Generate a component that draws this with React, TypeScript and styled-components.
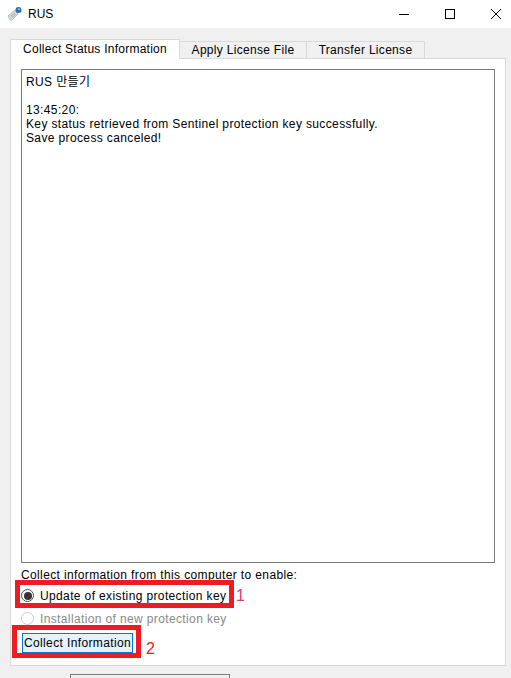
import styled, { createGlobalStyle } from "styled-components";

const GlobalStyle = createGlobalStyle`
    html, body {
        margin: 0;
        padding: 0;
        background: #f0f0f0;
        overflow: hidden;
    }
    * {
        box-sizing: border-box;
    }
`;

const Window = styled.div`
    width: 511px;
    height: 678px;
    overflow: hidden;
    display: flex;
    flex-direction: column;
    background: #f0f0f0;
    color: #000;
    font-family: "Liberation Sans", "Noto Sans CJK KR", sans-serif;
    font-size: 12px;
    letter-spacing: 0.37px;
`;

const TitleBar = styled.div`
    height: 28px;
    flex: none;
    background: #fff;
    display: flex;
    align-items: center;
    padding-left: 7px;
    margin-right: -8px;
`;

const TitleText = styled.span`
    margin-left: 5px;
    letter-spacing: 0;
    flex: 1;
`;

const WinButton = styled.div`
    width: 46px;
    height: 24px;
    display: flex;
    align-items: center;
    justify-content: center;
`;

const Content = styled.div`
    padding: 11px 5px 0 10px;
    display: flex;
    flex-direction: column;
`;

const TabRow = styled.div`
    display: flex;
    align-items: flex-start;
    height: 19px;
    position: relative;
    z-index: 1;
`;

const Tab = styled.div<{ $active?: boolean; $width: number }>`
    width: ${(p) => p.$width}px;
    height: ${(p) => (p.$active ? 20 : 17)}px;
    margin-top: ${(p) => (p.$active ? 0 : 2)}px;
    margin-left: ${(p) => (p.$active ? 0 : -1)}px;
    background: ${(p) => (p.$active ? "#fff" : "#f0f0f0")};
    border: 1px solid #d9d9d9;
    border-bottom: none;
    display: flex;
    align-items: center;
    justify-content: center;
    letter-spacing: ${(p) => (p.$active ? "0.25px" : "0.3px")};
    padding-bottom: ${(p) => (p.$active ? 2 : 1)}px;
    &:first-child {
        margin-left: 0;
    }
`;

const Panel = styled.div`
    height: 608px;
    background: #fff;
    border: 1px solid #d9d9d9;
    padding: 10px 10px 0 10px;
    display: flex;
    flex-direction: column;
`;

const LogBox = styled.div`
    height: 494px;
    flex: none;
    border: 1px solid #7a7a7a;
    padding: 5px 4px;
    line-height: 14px;
`;

const LogLine = styled.div`
    height: 14px;
    white-space: pre;
`;

const GroupLabel = styled.div`
    margin-top: 5px;
    margin-bottom: 2px;
    height: 14px;
    line-height: 14px;
    white-space: nowrap;
`;

const RadioRow = styled.div<{ $disabled?: boolean }>`
    display: flex;
    align-items: center;
    gap: 6px;
    height: 23px;
    color: ${(p) => (p.$disabled ? "#8a8a8a" : "#000")};
    position: relative;
`;

const RadioCircle = styled.span<{ $disabled?: boolean; $checked?: boolean }>`
    width: 13px;
    height: 13px;
    border-radius: 50%;
    border: 1px solid ${(p) => (p.$disabled ? "#cccccc" : "#4d4d4d")};
    display: flex;
    align-items: center;
    justify-content: center;
    background: #fff;
    &::after {
        content: "";
        display: ${(p) => (p.$checked ? "block" : "none")};
        width: 8px;
        height: 8px;
        border-radius: 50%;
        background: #333;
    }
`;

const ButtonWrap = styled.div`
    position: relative;
    width: 111px;
    margin-top: 3px;
    margin-left: 1px;
`;

const CollectButton = styled.button`
    display: block;
    width: 111px;
    height: 20px;
    background: #e5f1fb;
    border: 1px solid #0078d7;
    padding: 0;
    font: inherit;
    letter-spacing: inherit;
    color: #000;
    white-space: nowrap;
`;

const Highlight = styled.div<{ $top: number; $left: number; $width: number; $height: number }>`
    position: absolute;
    top: ${(p) => p.$top}px;
    left: ${(p) => p.$left}px;
    width: ${(p) => p.$width}px;
    height: ${(p) => p.$height}px;
    border: 5px solid #ed1c24;
    pointer-events: none;
`;

const Marker = styled.span<{ $top: number; $left: number; $color: string }>`
    position: absolute;
    top: ${(p) => p.$top}px;
    left: ${(p) => p.$left}px;
    color: ${(p) => p.$color};
    font-size: 16px;
    line-height: 18px;
    letter-spacing: 0;
`;

const BottomBar = styled.div`
    margin-top: 8px;
    margin-left: 60px;
    width: 160px;
    height: 20px;
    border: 1px solid #7a7a7a;
    background: #f0f0f0;
`;

const AppIcon = () => (
    <svg width="16" height="16" viewBox="0 0 16 16">
        <path d="M1 10 L8 4 L11 8 L5 14 L3 14 Z" fill="#d5dbd5" stroke="#a9b0a9" strokeWidth="0.8" />
        <path d="M4 10 L8 7 M5 11.5 L8.5 8.5" stroke="#8f968f" strokeWidth="0.7" />
        <circle cx="11.5" cy="4" r="3" fill="#2a6fb0" />
        <circle cx="12" cy="3.3" r="1" fill="#9cc7ea" />
    </svg>
);

const App = () => {
    return (
        <Window>
            <GlobalStyle />
            <TitleBar>
                <AppIcon />
                <TitleText>RUS</TitleText>
                <WinButton>
                    <svg width="10" height="10" viewBox="0 0 10 10">
                        <path d="M0 5.5H10" stroke="#000" strokeWidth="1" />
                    </svg>
                </WinButton>
                <WinButton>
                    <svg width="10" height="10" viewBox="0 0 10 10">
                        <rect x="0.5" y="0.5" width="9" height="9" fill="none" stroke="#000" strokeWidth="1" />
                    </svg>
                </WinButton>
                <WinButton>
                    <svg width="10" height="10" viewBox="0 0 10 10">
                        <path d="M0 0L10 10M10 0L0 10" stroke="#000" strokeWidth="1" />
                    </svg>
                </WinButton>
            </TitleBar>
            <Content>
                <TabRow>
                    <Tab $active $width={170}>Collect Status Information</Tab>
                    <Tab $width={128}>Apply License File</Tab>
                    <Tab $width={119}>Transfer License</Tab>
                </TabRow>
                <Panel>
                    <LogBox>
                        <LogLine>RUS 만들기</LogLine>
                        <LogLine> </LogLine>
                        <LogLine>13:45:20:</LogLine>
                        <LogLine>Key status retrieved from Sentinel protection key successfully.</LogLine>
                        <LogLine>Save process canceled!</LogLine>
                    </LogBox>
                    <GroupLabel>Collect information from this computer to enable:</GroupLabel>
                    <RadioRow>
                        <RadioCircle $checked />
                        Update of existing protection key
                        <Highlight $top={-4} $left={-6} $width={219} $height={28} />
                        <Marker $top={3} $left={215} $color="#e8386d">1</Marker>
                    </RadioRow>
                    <RadioRow $disabled>
                        <RadioCircle $disabled />
                        Installation of new protection key
                    </RadioRow>
                    <ButtonWrap>
                        <CollectButton>Collect Information</CollectButton>
                        <Highlight $top={-8} $left={-10} $width={129} $height={33} />
                        <Marker $top={7} $left={124} $color="#ed1c24">2</Marker>
                    </ButtonWrap>
                </Panel>
                <BottomBar />
            </Content>
        </Window>
    );
};

export default App;
